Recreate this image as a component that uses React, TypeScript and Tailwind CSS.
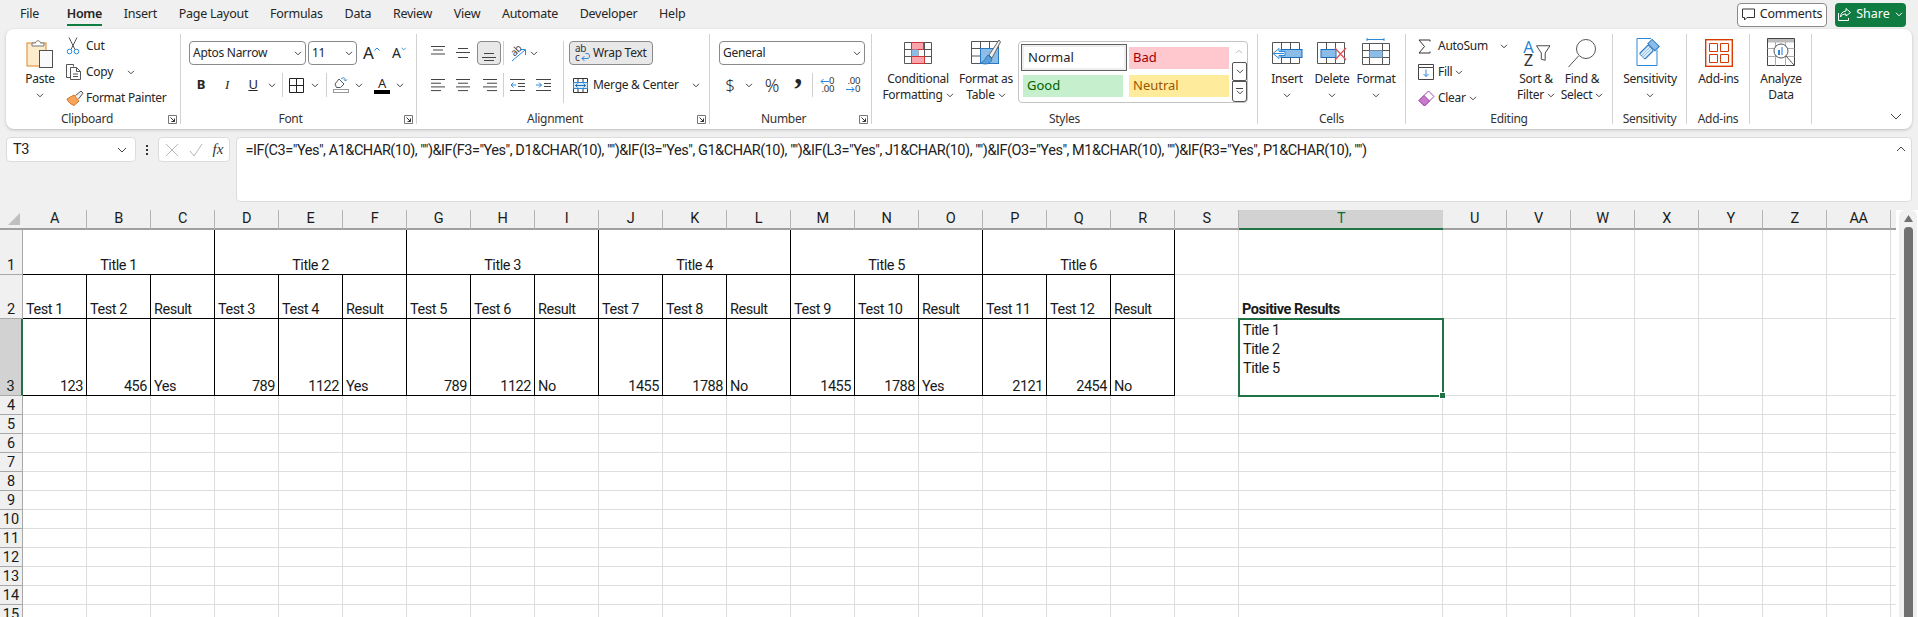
import type { ReactNode } from 'react'

const Chev = ({ c = '#444' }: { c?: string }) => (
  <svg width="8" height="5" viewBox="0 0 8 5" className="shrink-0"><path d="M1 .8l3 3 3-3" fill="none" stroke={c} strokeWidth="1" /></svg>
)

const Launcher = () => (
  <svg width="9" height="9" viewBox="0 0 9 9"><path d="M.5 8.500V.5h8v8z" fill="none" stroke="#777" /><path d="M2.500 2.500l4 4M6.500 3.500v3h-3" fill="none" stroke="#333" /></svg>
)

const Sep = ({ tall }: { tall?: boolean }) => <div className={tall ? 'w-px h-[62px] bg-[#d0d0d0]' : 'w-px h-[24px] bg-[#d0d0d0]'} />

// ribbon group, label row sits at the bottom
function Group({ w, label, launcher, shift = '', children }: { w: string; label?: string; launcher?: boolean; shift?: string; children: ReactNode }) {
  return (
    <div className={w + ' shrink-0 h-[90px] flex flex-col border-r border-[#d2d2d2]'}>
      <div className="flex-1 flex min-h-0">{children}</div>
      <div className="h-[14px] grid grid-cols-[1fr_auto_1fr] items-center leading-[18px] text-[#333]">
        <span />
        <span className={shift}>{label}</span>
        <span className="justify-self-end pr-[3px] flex">{launcher && <Launcher />}</span>
      </div>
    </div>
  )
}

function BigBtn({ w, icon, line1, line2, chev, className = '' }: { w: string; icon: ReactNode; line1: string; line2?: string; chev?: boolean; className?: string }) {
  return (
    <div className={w + ' shrink-0 flex flex-col items-center pt-[4px] ' + className}>
      <div className="h-[30px] flex items-center justify-center">{icon}</div>
      <div className="mt-[3px] leading-[16px] whitespace-nowrap">{line1}</div>
      <div className="h-[16px] leading-[16px] flex items-center gap-[3px] whitespace-nowrap">
        {line2 && <span>{line2}</span>}
        {chev && <Chev />}
      </div>
    </div>
  )
}

const Slot = ({ w, children }: { w: string; children: ReactNode }) => <div className={w + ' shrink-0 h-[24px] flex items-center justify-center'}>{children}</div>

const VLines = ({ ys, x = [1, 1, 1], w = [14, 14, 14] }: { ys: number[]; x?: number[]; w?: number[] }) => (
  <svg width="16" height="24" viewBox="0 0 16 24">
    {ys.map((y, i) => <rect key={i} x={x[i]} y={y} width={w[i]} height="1" fill="#444" />)}
  </svg>
)

const HLines = ({ mode }: { mode: 'l' | 'c' | 'r' }) => {
  const long = [14, 10, 14, 10]
  return (
    <svg width="16" height="16" viewBox="0 0 16 16">
      {long.map((w, i) => <rect key={i} x={mode === 'l' ? 1 : mode === 'c' ? (16 - w) / 2 : 15 - w} y={2 + i * 3.7} width={w} height="1" fill="#444" />)}
    </svg>
  )
}

const PasteIcon = () => (
  <svg width="28" height="30" viewBox="0 0 28 30">
    <rect x="1" y="5" width="19" height="23" fill="#fdeccb" stroke="#dd8527" />
    <path d="M6 8V5h3.500c.3-3 4.700-3 5 0H18v3z" fill="#fff" stroke="#777" />
    <rect x="13.500" y="12.500" width="13" height="17" fill="#fafafa" stroke="#505050" />
  </svg>
)
const CutIcon = () => (
  <svg width="14" height="18" viewBox="0 0 14 18">
    <path d="M3 .5l6 12M11 .5l-6 12" fill="none" stroke="#555" />
    <circle cx="3.500" cy="14.500" r="2.300" fill="none" stroke="#2b88d8" />
    <circle cx="10.500" cy="14.500" r="2.300" fill="none" stroke="#2b88d8" />
  </svg>
)
const CopyIcon = () => (
  <svg width="16" height="16" viewBox="0 0 16 16">
    <path d="M4.500 13.500h-4V.5h7v2" fill="none" stroke="#555" />
    <path d="M4.500 3.500h6l4 4v8h-10z M10.500 3.500v4h4 M7 10h5M7 12.500h5" fill="none" stroke="#555" />
  </svg>
)
const PainterIcon = () => (
  <svg width="18" height="16" viewBox="0 0 18 16">
    <path d="M1 9l7-4 5 6-5 4.500C5 14.500 2 12 1 9z" fill="#f6a45a" stroke="#d9731f" />
    <path d="M9.500 5.500L15 1l2 2.200-4.500 5.800" fill="#eee" stroke="#555" />
  </svg>
)
const BordersIcon = () => (
  <svg width="15" height="15" viewBox="0 0 15 15"><path d="M.5.5h14v14H.5z M7.500.5v14M.5 7.500h14" fill="none" stroke="#222" /></svg>
)
const FillIcon = () => (
  <svg width="16" height="18" viewBox="0 0 16 18">
    <path d="M2 8l4-5 5 5-3.500 3.500H3.500z" fill="#fff" stroke="#555" />
    <path d="M8 3c2-2 4-1.500 4.500 1.500M11 3.500l1.500 1.500 1.500-1.500" fill="none" stroke="#2b88d8" />
    <rect x=".5" y="13.500" width="15" height="3" fill="#fff" stroke="#999" />
  </svg>
)
const OrientIcon = () => (
  <div className="relative w-[17px] h-[17px]">
    <span className="absolute left-0 top-[-1px] text-[10px] leading-[12px] rotate-[-45deg] text-[#444]">ab</span>
    <svg width="17" height="17" viewBox="0 0 17 17" className="absolute inset-0"><path d="M2 16L15 5M10 4.500h5.500V10" fill="none" stroke="#2b88d8" /></svg>
  </div>
)
const IndentIcon = ({ dir }: { dir: 'in' | 'out' }) => (
  <svg width="16" height="14" viewBox="0 0 16 14">
    <path d="M0 1.500h15M8 5.500h7M8 8.500h7M0 12.500h15" stroke="#444" fill="none" />
    {dir === 'out'
      ? <path d="M6 7H1M3.500 4.500L1 7l2.500 2.500" stroke="#2b88d8" fill="none" />
      : <path d="M0 7h5.500M3 4.500L5.500 7 3 9.500" stroke="#2b88d8" fill="none" />}
  </svg>
)
const MergeIcon = () => (
  <svg width="15" height="15" viewBox="0 0 15 15">
    <path d="M.5.500h14v14H.5z M.5 4.500h14 M.5 10.500h14 M5 .500v4 M10 .500v4 M5 10.500v4 M10 10.500v4" fill="none" stroke="#333" />
    <rect x=".5" y="4.500" width="14" height="6" fill="#d6e9f8" stroke="#2b88d8" />
    <path d="M2.500 7.500h10M4.500 5.700L2.500 7.500l2 1.800M10.500 5.700l2 1.800-2 1.800" fill="none" stroke="#1b6fb8" />
  </svg>
)
const WrapIcon = () => (
  <div className="relative w-[16px] h-[18px] text-[10px] leading-[9px] text-[#333]">
    ab<br />c
    <svg width="10" height="10" viewBox="0 0 10 10" className="absolute left-[6px] top-[8px]"><path d="M1 6.500h5c3.500 0 3.500-5 0-5H4.500M1 6.500l2.500-2.500M1 6.500L3.500 9" fill="none" stroke="#2b88d8" /></svg>
  </div>
)
const ArrowL = () => <svg width="9" height="7" viewBox="0 0 9 7"><path d="M9 3.500H1M3.500 1L1 3.500 3.500 6" fill="none" stroke="#2b88d8" /></svg>
const ArrowR = () => <svg width="9" height="7" viewBox="0 0 9 7"><path d="M0 3.500h8M5.500 1L8 3.500 5.500 6" fill="none" stroke="#2b88d8" /></svg>
const CellGrid = ({ children, w = 28 }: { children?: ReactNode; w?: number }) => (
  <svg width={w} height="30" viewBox={`0 0 ${w} 30`}>
    {children}
  </svg>
)
const gridLines = 'M.5 4.500h27v21H.5z M7.500 4.500v21 M14 4.500v21 M20.500 4.500v21 M.5 11.500h27 M.5 18.500h27'
const CondIcon = () => (
  <CellGrid>
    <path d={gridLines} fill="#fff" stroke="#555" />
    <rect x="7.500" y="4.500" width="12" height="7" fill="#f9a5ab" stroke="#d13438" />
    <rect x="7.500" y="11.500" width="6.500" height="7" fill="#8bbde8" />
    <rect x="7.500" y="18.500" width="13" height="7" fill="#f9a5ab" stroke="#d13438" />
  </CellGrid>
)
const TableIcon = () => (
  <CellGrid w={30}>
    <path d="M.5 3.500h27v22H.5z M9.500 3.500v22 M18.500 3.500v22 M.5 10.500h27 M.5 18h27" fill="#fff" stroke="#555" />
    <rect x="9.500" y="10.500" width="18" height="15" fill="#8bbde8" stroke="#2b78c2" />
    <path d="M28 2L18 17l3 3L29.500 4z" fill="#eee" stroke="#666" />
    <path d="M17 17c-3 3-3 6-7 8 4 2 10 1 11-4z" fill="#5a9fd8" stroke="#2b78c2" />
  </CellGrid>
)
const InsertIcon = () => (
  <svg width="32" height="30" viewBox="0 0 32 30">
    <path d="M1.500 4.500h27v21h-27z M10.500 4.500v21 M19.500 4.500v21" fill="#fff" stroke="#555" />
    <rect x="10" y="11.500" width="21" height="8" fill="#8bbde8" stroke="#1b6fb8" />
    <path d="M13 15.500H3M8 10.500l-6 5 6 5v-3h6v-4H8z" fill="#fff" stroke="#2b88d8" />
  </svg>
)
const DeleteIcon = () => (
  <svg width="30" height="30" viewBox="0 0 30 30">
    <path d="M.5 4.500h27v21H.5z M9.500 4.500v21 M18.500 4.500v21" fill="#fff" stroke="#555" />
    <rect x="4" y="11.500" width="15" height="8" fill="#8bbde8" stroke="#1b6fb8" />
    <path d="M18 10l11 12M29 10L18 22" fill="none" stroke="#e8505b" strokeWidth="1.300" />
  </svg>
)
const FormatIcon = () => (
  <svg width="28" height="30" viewBox="0 0 28 30">
    <path d="M5 1.500h17M5 0v3M22 0v3" fill="none" stroke="#2b88d8" />
    <path d="M.5 5.500h27v21H.5z M7.500 5.500v21 M20.500 5.500v21 M.5 12.500h27 M.5 19.500h27" fill="#fff" stroke="#555" />
    <rect x="7.500" y="12.500" width="13" height="7" fill="#8bbde8" />
  </svg>
)
const SigmaIcon = () => (
  <svg width="13" height="15" viewBox="0 0 13 15"><path d="M12 2.500V1H1l5.500 6.500L1 14h11v-1.500" fill="none" stroke="#333" /></svg>
)
const FillDownIcon = () => (
  <svg width="16" height="16" viewBox="0 0 16 16">
    <path d="M.5 3.500v12h15v-12z" fill="#fff" stroke="#444" />
    <path d="M.5.500h15v3H.5z" fill="#fff" stroke="#444" />
    <path d="M8 5.500v7M5.500 10L8 12.500 10.500 10" fill="none" stroke="#2b88d8" />
  </svg>
)
const EraserIcon = () => (
  <svg width="17" height="17" viewBox="0 0 17 17">
    <path d="M1 10.500L10.500 1 16 6.500 6.500 16z" fill="#fff" stroke="#a347a8" />
    <path d="M1 10.500L6 5.500l5.500 5.500-5 5z" fill="#c77bcc" stroke="#a347a8" />
  </svg>
)
const SortIcon = () => (
  <div className="flex w-[29px] h-[30px] items-start">
    <div className="flex flex-col text-[16.500px] leading-[13px] w-[14px] items-center pt-[2px]">
      <span className="text-[#2b88d8]">A</span>
      <span className="text-[#333]">Z</span>
    </div>
    <svg width="15" height="30" viewBox="0 0 15 30" className="ml-[1px]"><path d="M.5 7.500h14L9.500 15v7.500l-4-1V15z" fill="#fff" stroke="#444" /></svg>
  </div>
)
const FindIcon = () => (
  <svg width="30" height="30" viewBox="0 0 30 30">
    <circle cx="19" cy="11" r="9.500" fill="#fff" stroke="#555" />
    <path d="M11.500 18L1.500 29" fill="none" stroke="#555" />
  </svg>
)
const SensIcon = () => (
  <svg width="28" height="30" viewBox="0 0 28 30">
    <path d="M15 .500H1v27h20V12" fill="#fff" stroke="#2b88d8" />
    <g transform="rotate(-45 14 12)">
      <rect x="4" y="7" width="12" height="8" rx="1" fill="#8bbde8" stroke="#2b78c2" />
      <path d="M4 11h12M4 9h12M4 13h12" stroke="#fff" />
      <rect x="17" y="6" width="6" height="10" fill="#8bbde8" stroke="#2b78c2" />
    </g>
  </svg>
)
const AddinsIcon = () => (
  <svg width="28" height="28" viewBox="0 0 28 28">
    <rect x=".7" y=".7" width="26.600" height="26.600" fill="#fff" stroke="#d83b01" strokeWidth="1.400" />
    <path d="M4.500 4.500h8v8h-8z M15.500 4.500h8v8h-8z M4.500 15.500h8v8h-8z M15.500 15.500h8v8h-8z" fill="none" stroke="#d83b01" />
  </svg>
)
const AnalyzeIcon = () => (
  <svg width="28" height="30" viewBox="0 0 28 30">
    <path d="M.5.500h27v27H.5z" fill="#fff" stroke="#444" />
    <rect x="1" y="1" width="26" height="3.500" fill="#bbb" />
    <path d="M.5 10.500h27M.5 18.500h27M8.500 4v24M18.500 4v24" stroke="#aaa" />
    <circle cx="14" cy="13" r="7" fill="#fff" stroke="#555" />
    <rect x="11" y="12" width="2" height="5" fill="#2b88d8" />
    <rect x="14" y="9" width="2" height="8" fill="#8bbde8" />
    <path d="M19 18l8 9" stroke="#555" />
  </svg>
)

function RibbonRow({ icon, children }: { icon: ReactNode; children: ReactNode }) {
  return (
    <div className="h-[26px] flex items-center whitespace-nowrap">
      <div className="w-[20px] shrink-0 flex items-center">{icon}</div>
      {children}
    </div>
  )
}

function Ribbon() {
  return (
    <div className="mx-[6px] h-[100px] bg-white rounded-[8px] shadow-[0_1px_3px_rgba(0,0,0,0.22)] py-[5px] flex text-[12px] tracking-[-0.28px] text-[#262626]">
      <Group w="w-[175px]" label="Clipboard" launcher shift="-translate-x-[6px]">
        <BigBtn w="w-[40px] ml-[14px]" icon={<PasteIcon />} line1="Paste" chev />
        <div className="ml-[6px] -mt-px">
          <RibbonRow icon={<CutIcon />}>Cut</RibbonRow>
          <RibbonRow icon={<CopyIcon />}>Copy<span className="ml-[14px]"><Chev /></span></RibbonRow>
          <RibbonRow icon={<PainterIcon />}>Format Painter</RibbonRow>
        </div>
      </Group>

      <Group w="w-[236px]" label="Font" launcher shift="-translate-x-[8px]">
        <div className="pl-[8px] pt-[7px]">
          <div className="flex items-center h-[24px]">
            <div className="w-[117px] h-[24px] border border-[#8a8a8a] rounded-[4px] flex items-center justify-between px-[3px]">
              Aptos Narrow<Chev />
            </div>
            <div className="ml-[2px] w-[49px] h-[24px] border border-[#8a8a8a] rounded-[4px] flex items-center justify-between px-[3px]">
              11<Chev />
            </div>
            <div className="ml-[6px] w-[18px] flex items-start">
              <span className="text-[17px] leading-[20px]">A</span>
              <svg width="6" height="4" viewBox="0 0 6 4" className="mt-[4px]"><path d="M.5 3.500L3 1l2.500 2.500" fill="none" stroke="#2b88d8" /></svg>
            </div>
            <div className="ml-[11px] w-[14px] flex items-start">
              <span className="text-[14px] leading-[20px]">A</span>
              <svg width="6" height="4" viewBox="0 0 6 4" className="mt-[4px]"><path d="M.5.500L3 3l2.500-2.500" fill="none" stroke="#2b88d8" /></svg>
            </div>
          </div>
          <div className="flex items-center mt-[8px]">
            <Slot w="w-[24px]"><span className="font-bold text-[13px]">B</span></Slot>
            <Slot w="w-[28px]"><span className="italic text-[13px] font-['Liberation_Serif',serif]">I</span></Slot>
            <Slot w="w-[24px]"><span className="underline text-[13px]">U</span></Slot>
            <Slot w="w-[14px]"><Chev /></Slot>
            <div className="ml-[3px]"><Sep /></div>
            <Slot w="w-[15px] ml-[6px]"><BordersIcon /></Slot>
            <Slot w="w-[22px]"><Chev /></Slot>
            <Sep />
            <Slot w="w-[16px] ml-[6px]"><FillIcon /></Slot>
            <Slot w="w-[20px]"><Chev /></Slot>
            <div className="w-[16px] ml-[5px] flex flex-col items-center">
              <span className="text-[13px] leading-[13px]">A</span>
              <div className="w-[16px] h-[4px] bg-black" />
            </div>
            <Slot w="w-[20px]"><Chev /></Slot>
          </div>
        </div>
      </Group>

      <Group w="w-[293px]" label="Alignment" launcher shift="-translate-x-[8px]">
        <div className="flex pt-[7px]">
          <div className="w-[146px] shrink-0">
            <div className="flex items-center h-[24px]">
              <Slot w="w-[22px] ml-[10px]"><VLines ys={[5, 8.5, 12.5]} x={[1, 3, 1]} w={[14, 10, 14]} /></Slot>
              <Slot w="w-[22px] ml-[3px]"><VLines ys={[7, 11, 16]} x={[3, 1, 3]} w={[10, 14, 10]} /></Slot>
              <Slot w="w-[24px] ml-[3px] bg-[#e8e8e8] border border-[#8a8a8a] rounded-[4px]"><VLines ys={[12, 16, 19]} x={[3, 1, 3]} w={[10, 14, 10]} /></Slot>
              <div className="ml-[2px]"><Sep /></div>
              <div className="ml-[6px]"><OrientIcon /></div>
              <Slot w="w-[14px]"><Chev /></Slot>
            </div>
            <div className="flex items-center h-[24px] mt-[8px]">
              <Slot w="w-[22px] ml-[10px]"><HLines mode="l" /></Slot>
              <Slot w="w-[22px] ml-[3px]"><HLines mode="c" /></Slot>
              <Slot w="w-[22px] ml-[5px]"><HLines mode="r" /></Slot>
              <div className="ml-[2px]"><Sep /></div>
              <Slot w="w-[16px] ml-[6px]"><IndentIcon dir="out" /></Slot>
              <Slot w="w-[16px] ml-[10px]"><IndentIcon dir="in" /></Slot>
            </div>
          </div>
          <Sep tall />
          <div className="shrink-0">
            <div className="ml-[5px] w-[84px] h-[24px] bg-[#e8e8e8] border border-[#8a8a8a] rounded-[4px] flex items-center pl-[5px]">
              <WrapIcon />
              <span className="ml-[2px] whitespace-nowrap">Wrap Text</span>
            </div>
            <div className="flex items-center h-[24px] mt-[8px] ml-[9px] whitespace-nowrap">
              <MergeIcon />
              <span className="ml-[5px]">Merge &amp; Center</span>
              <span className="ml-[13px]"><Chev /></span>
            </div>
          </div>
        </div>
      </Group>

      <Group w="w-[162px]" label="Number" launcher shift="-translate-x-[7px]">
        <div className="pt-[7px]">
          <div className="ml-[9px] w-[146px] h-[24px] border border-[#8a8a8a] rounded-[4px] flex items-center justify-between px-[3px]">
            General<Chev />
          </div>
          <div className="flex items-center mt-[8px]">
            <Slot w="w-[20px] ml-[10px]"><span className="text-[17px] font-light">$</span></Slot>
            <Slot w="w-[18px]"><Chev /></Slot>
            <Slot w="w-[28px]"><span className="text-[18px] font-light">%</span></Slot>
            <Slot w="w-[24px]"><span className="text-[32px] font-bold leading-[14px] -mt-[24px] font-['Liberation_Serif',serif]">,</span></Slot>
            <div className="ml-[2px]"><Sep /></div>
            <Slot w="w-[20px] ml-[4px]">
              <div className="text-[9.500px] leading-[8px] tracking-[-0.3px] text-[#333] flex flex-col items-end">
                <div className="flex items-center"><ArrowL /><span>0</span></div>
                <span>.00</span>
              </div>
            </Slot>
            <Slot w="w-[20px] ml-[6px]">
              <div className="text-[9.500px] leading-[8px] tracking-[-0.3px] text-[#333] flex flex-col items-end">
                <span>.00</span>
                <div className="flex items-center"><ArrowR /><span>0</span></div>
              </div>
            </Slot>
          </div>
        </div>
      </Group>

      <Group w="w-[386px]" label="Styles">
        <BigBtn w="w-[70px] ml-[11px]" icon={<CondIcon />} line1="Conditional" line2="Formatting" chev />
        <BigBtn w="w-[60px] ml-[3px]" icon={<TableIcon />} line1="Format as" line2="Table" chev />
        <div className="ml-[2px] mt-[7px] w-[230px] h-[62px] border border-[#c4c4c4] rounded-[4px] flex text-[13px] tracking-normal">
          <div className="w-[213px] shrink-0">
            <div className="flex items-start h-[29px]">
              <div className="ml-[2px] mt-[2px] w-[106px] h-[27px] border-[1.500px] border-[#606060] outline outline-[2px] -outline-offset-[3.500px] outline-[#eeeeee] bg-white flex items-center pl-[6px] text-[#1f1f1f]">Normal</div>
              <div className="ml-[2px] mt-[5px] w-[100px] h-[22px] bg-[#ffc7ce] text-[#9c0006] flex items-center pl-[4px]">Bad</div>
            </div>
            <div className="flex mt-[4px]">
              <div className="ml-[4px] w-[100px] h-[22px] bg-[#c6efce] text-[#006100] flex items-center pl-[4px]">Good</div>
              <div className="ml-[6px] w-[100px] h-[22px] bg-[#ffeb9c] text-[#9c5700] flex items-center pl-[4px]">Neutral</div>
            </div>
          </div>
          <div className="ml-auto w-[15px] flex flex-col">
            <div className="h-[20px] flex items-center justify-center rotate-180"><Chev c="#bbb" /></div>
            <div className="h-[19px] border border-[#555] rounded-[2px] flex items-center justify-center"><Chev /></div>
            <div className="flex-1 border border-[#555] rounded-b-[3px] flex flex-col items-center justify-center gap-[1px]">
              <div className="w-[7px] h-px bg-[#444]" /><Chev />
            </div>
          </div>
        </div>
      </Group>

      <Group w="w-[148px]" label="Cells">
        <BigBtn w="w-[44px] ml-[7px]" icon={<InsertIcon />} line1="Insert" chev />
        <BigBtn w="w-[44px] ml-[1px]" icon={<DeleteIcon />} line1="Delete" chev />
        <BigBtn w="w-[44px]" icon={<FormatIcon />} line1="Format" chev />
      </Group>

      <Group w="w-[207px]" label="Editing">
        <div className="w-[108px] shrink-0 pl-[12px] -mt-px">
          <RibbonRow icon={<SigmaIcon />}>AutoSum<span className="ml-[12px]"><Chev /></span></RibbonRow>
          <RibbonRow icon={<FillDownIcon />}>Fill<span className="ml-[3px]"><Chev /></span></RibbonRow>
          <RibbonRow icon={<EraserIcon />}>Clear<span className="ml-[3px]"><Chev /></span></RibbonRow>
        </div>
        <BigBtn w="w-[44px]" icon={<SortIcon />} line1="Sort &" line2="Filter" chev />
        <BigBtn w="w-[46px] ml-[1px]" icon={<FindIcon />} line1="Find &" line2="Select" chev />
      </Group>

      <Group w="w-[74px]" label="Sensitivity">
        <BigBtn w="w-[74px]" icon={<SensIcon />} line1="Sensitivity" chev />
      </Group>

      <Group w="w-[63px]" label="Add-ins">
        <BigBtn w="w-[63px]" icon={<AddinsIcon />} line1="Add-ins" />
      </Group>

      <Group w="w-[62px]">
        <BigBtn w="w-[62px]" icon={<AnalyzeIcon />} line1="Analyze" line2="Data" />
      </Group>

      <div className="flex-1 flex items-end justify-end pr-[10px] pb-[4px]">
        <svg width="12" height="7" viewBox="0 0 12 7"><path d="M1 1l5 5 5-5" fill="none" stroke="#444" /></svg>
      </div>
    </div>
  )
}

function FormulaBar() {
  return (
    <div className="mt-[8px] mx-[6px] h-[65px] flex items-start">
      <div className="w-[130px] h-[25px] bg-white border border-[#dcdcdc] rounded-[4px] flex items-center justify-between pl-[6px] pr-[8px] font-['Roboto',sans-serif] text-[14.500px] tracking-[-0.46px] text-[#222]">
        T3
        <svg width="10" height="6" viewBox="0 0 10 6"><path d="M1 1l4 4 4-4" fill="none" stroke="#444" /></svg>
      </div>
      <div className="w-[21.500px] h-[25px] flex flex-col items-center justify-center gap-[2px]">
        <div className="w-[2px] h-[2px] bg-[#333]" /><div className="w-[2px] h-[2px] bg-[#333]" /><div className="w-[2px] h-[2px] bg-[#333]" />
      </div>
      <div className="w-[72.500px] h-[25px] bg-white border border-[#dcdcdc] rounded-[4px] flex items-center pl-[6px] gap-[10px]">
        <svg width="14" height="14" viewBox="0 0 14 14"><path d="M1 1l12 12M13 1L1 13" stroke="#b8b8b8" fill="none" /></svg>
        <svg width="14" height="14" viewBox="0 0 14 14"><path d="M1 8l4 5 8-12" stroke="#b8b8b8" fill="none" /></svg>
        <span className="italic text-[15px] leading-[15px] font-['Liberation_Serif',serif] text-[#333]">fx</span>
      </div>
      <div className="ml-[5.500px] flex-1 h-[65px] bg-white border border-[#dcdcdc] rounded-[4px] flex justify-between pl-[9px] pr-[5px] pt-[4px] font-['Roboto',sans-serif] text-[14.500px] tracking-[-0.46px] leading-[18px] text-[#222]">
        <span className="whitespace-nowrap">{'=IF(C3="Yes", A1&CHAR(10), "")&IF(F3="Yes", D1&CHAR(10), "")&IF(I3="Yes", G1&CHAR(10), "")&IF(L3="Yes", J1&CHAR(10), "")&IF(O3="Yes", M1&CHAR(10), "")&IF(R3="Yes", P1&CHAR(10), "")'}</span>
        <svg width="10" height="6" viewBox="0 0 10 6" className="mt-[4px]"><path d="M1 5l4-4 4 4" fill="none" stroke="#444" /></svg>
      </div>
    </div>
  )
}

const colNames = ['A', 'B', 'C', 'D', 'E', 'F', 'G', 'H', 'I', 'J', 'K', 'L', 'M', 'N', 'O', 'P', 'Q', 'R', 'S', 'T', 'U', 'V', 'W', 'X', 'Y', 'Z', 'AA']
const titles = ['Title 1', 'Title 2', 'Title 3', 'Title 4', 'Title 5', 'Title 6']
const tests = ['Test 1', 'Test 2', 'Result', 'Test 3', 'Test 4', 'Result', 'Test 5', 'Test 6', 'Result', 'Test 7', 'Test 8', 'Result', 'Test 9', 'Test 10', 'Result', 'Test 11', 'Test 12', 'Result']
const values = ['123', '456', 'Yes', '789', '1122', 'Yes', '789', '1122', 'No', '1455', '1788', 'No', '1455', '1788', 'Yes', '2121', '2454', 'No']

const blackCell = 'border-r border-b border-black flex items-end leading-[16px] px-[3px] whitespace-nowrap overflow-hidden'
const plainCell = 'border-r border-b border-[#dedede]'

const RowHead = ({ n, active }: { n: number; active?: boolean }) => (
  <div className={active
    ? 'bg-[#d2d2d2] border-r-2 border-[#217346] border-b border-b-[#a8a8a8] flex items-end justify-center leading-[17px] tracking-normal'
    : 'bg-[#f0f0f0] border-r border-b border-r-[#a8a8a8] border-b-[#a8a8a8] flex items-end justify-center leading-[17px] tracking-normal'}>{n}</div>
)

const PlainRest = ({ from }: { from: number }) => (
  <>
    {colNames.slice(from).map(c => <div key={c} className={plainCell} />)}
    <div className="border-b border-[#dedede]" />
  </>
)

function Sheet() {
  return (
    <div className="mt-[8px] flex bg-white h-[407px] overflow-hidden">
      <div className="grid grid-cols-[23px_repeat(19,64px)_204px_repeat(7,64px)_5px] grid-rows-[20px_45px_44px_77px_repeat(12,19px)] font-['Roboto',sans-serif] text-[14.500px] tracking-[-0.46px] text-[#1a1a1a]">
        {/* column headers */}
        <div className="bg-[#f0f0f0] border-b-2 border-[#a0a0a0] flex items-end justify-end pr-[3px] pb-[3px]">
          <svg width="12" height="12" viewBox="0 0 12 12"><path d="M12 0v12H0z" fill="#bfbfbf" /></svg>
        </div>
        {colNames.map(c => (
          <div key={c} className={c === 'T'
            ? 'bg-[#d2d2d2] border-b-2 border-[#217346] flex items-center justify-center text-[#0f6b3a]'
            : 'bg-[#f0f0f0] border-r border-[#b4b4b4] border-b-2 border-b-[#a0a0a0] flex items-center justify-center'}>{c}</div>
        ))}
        <div className="bg-[#f0f0f0] border-b-2 border-[#a0a0a0]" />

        {/* row 1 */}
        <RowHead n={1} />
        {titles.map(t => <div key={t} className={'col-span-3 justify-center ' + blackCell}>{t}</div>)}
        <PlainRest from={18} />

        {/* row 2 */}
        <RowHead n={2} />
        {tests.map((t, i) => <div key={i} className={blackCell}>{t}</div>)}
        <div className={plainCell} />
        <div className={plainCell + ' flex items-end leading-[16px] px-[3px] font-bold'}>Positive Results</div>
        <PlainRest from={20} />

        {/* row 3 */}
        <RowHead n={3} active />
        {values.map((v, i) => <div key={i} className={/\d/.test(v) ? 'justify-end ' + blackCell : blackCell}>{v}</div>)}
        <div className={plainCell} />
        <div className="relative">
          <div className="absolute -left-px -top-px -right-px -bottom-px border-2 border-[#217346] px-[3px] pt-[1px] leading-[19px]">
            Title 1<br />Title 2<br />Title 5
          </div>
          <div className="absolute -right-[3px] -bottom-[3px] w-[5px] h-[5px] bg-[#217346] border border-white box-content" />
        </div>
        <PlainRest from={20} />

        {/* empty rows */}
        {[4, 5, 6, 7, 8, 9, 10, 11, 12, 13, 14, 15].map(n => (
          <div key={n} className="contents">
            <RowHead n={n} />
            <PlainRest from={0} />
          </div>
        ))}
      </div>
      <div className="ml-[3px] w-[18px] bg-[#f0f0f0] rounded-t-[6px] flex flex-col items-center">
        <svg width="9" height="7" viewBox="0 0 9 7" className="mt-[5px]"><path d="M4.500 0L9 7H0z" fill="#707070" /></svg>
        <div className="w-[9px] flex-1 mt-[5px] bg-[#707070] rounded-t-[4px]" />
      </div>
    </div>
  )
}

export default function App() {
  const tabs = ['Insert', 'Page Layout', 'Formulas', 'Data', 'Review', 'View', 'Automate', 'Developer', 'Help']
  return (
    <div className="w-[1918px] h-[617px] overflow-hidden bg-[#f0f0f0] font-['Noto_Sans','Liberation_Sans',sans-serif] text-[12px] text-[#262626]">
      {/* tab strip */}
      <div className="h-[29px] flex items-center">
        <div className="flex items-center pl-[20px] gap-[21.700px] h-full text-[12.500px] tracking-[-0.25px]">
          <span className="mr-[6px]">File</span>
          <div className="h-full flex items-center relative font-semibold">
            Home
            <div className="absolute left-0 right-0 bottom-[3px] h-[2px] bg-[#107c41]" />
          </div>
          {tabs.map(t => <span key={t}>{t}</span>)}
        </div>
        <div className="ml-auto flex items-center mr-[12px]">
          <div className="w-[90px] h-[24px] bg-white border border-[#8a8a8a] rounded-[4px] flex items-center justify-center gap-[5px] text-[12.500px] tracking-[-0.2px]">
            <svg width="13" height="13" viewBox="0 0 13 13"><path d="M.5 1h12v8.500H5L2.500 12V9.500h-2z" fill="none" stroke="#333" /></svg>
            Comments
          </div>
          <div className="ml-[8px] w-[71px] h-[24px] bg-[#107c41] rounded-[4px] flex items-center justify-center gap-[5px] text-[12.500px] text-white">
            <svg width="13" height="13" viewBox="0 0 13 13"><path d="M8 .5l4.500 4L8 8V6C5 6 3.500 7 2.500 9c0-3.500 2-5.500 5.500-6z M.5 5v7.500h10V10" fill="none" stroke="#fff" /></svg>
            Share
            <Chev c="#fff" />
          </div>
        </div>
      </div>
      <Ribbon />
      <FormulaBar />
      <Sheet />
    </div>
  )
}
